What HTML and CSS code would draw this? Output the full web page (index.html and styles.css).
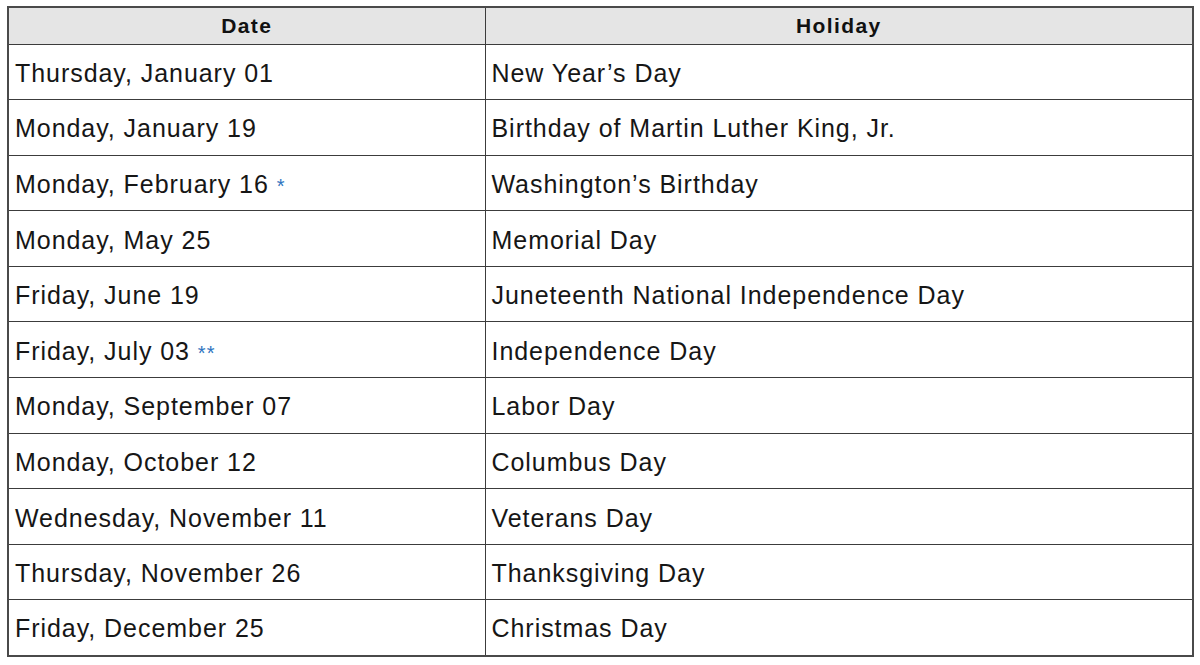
FILE: index.html
```html
<!DOCTYPE html>
<html>
<head>
<meta charset="utf-8">
<link rel="stylesheet" href="styles.css">
</head>
<body>
<table class="holidays">
  <colgroup><col class="c-date"><col class="c-hol"></colgroup>
  <thead>
    <tr><th>Date</th><th>Holiday</th></tr>
  </thead>
  <tbody>
    <tr><td>Thursday, January 01</td><td>New Year’s Day</td></tr>
    <tr><td>Monday, January 19</td><td>Birthday of Martin Luther King, Jr.</td></tr>
    <tr><td>Monday, February 16 <span class="note">*</span></td><td>Washington’s Birthday</td></tr>
    <tr><td>Monday, May 25</td><td>Memorial Day</td></tr>
    <tr><td>Friday, June 19</td><td>Juneteenth National Independence Day</td></tr>
    <tr><td>Friday, July 03 <span class="note">**</span></td><td>Independence Day</td></tr>
    <tr><td>Monday, September 07</td><td>Labor Day</td></tr>
    <tr><td>Monday, October 12</td><td>Columbus Day</td></tr>
    <tr><td>Wednesday, November 11</td><td>Veterans Day</td></tr>
    <tr><td>Thursday, November 26</td><td>Thanksgiving Day</td></tr>
    <tr><td>Friday, December 25</td><td>Christmas Day</td></tr>
  </tbody>
</table>
</body>
</html>
```
FILE: styles.css
```css
html, body {
  margin: 0;
  padding: 0;
  background: #ffffff;
}
body {
  padding: 6px 0 0 7px;
  font-family: "Liberation Sans", Arial, sans-serif;
  color: #161616;
}
.holidays {
  border-collapse: collapse;
  width: 1185px;
  table-layout: fixed;
  border: 2px solid #4a4a4a;
}
.c-date { width: 477px; }
.c-hol { width: 708px; }
.holidays th {
  background: #e5e5e5;
  font-size: 21px;
  font-weight: bold;
  letter-spacing: 1.4px;
  color: #111;
  height: 37px;
  padding: 0;
  text-align: center;
  border: 1px solid #3c3c3c;
  box-sizing: border-box;
}
.holidays td {
  font-size: 25px;
  letter-spacing: 0.95px;
  height: 55.6px;
  padding: 3px 0 0 6px;
  border: 1px solid #3c3c3c;
  box-sizing: border-box;
  vertical-align: middle;
  white-space: nowrap;
}
.note {
  color: #2f74c0;
  font-size: 20px;
  letter-spacing: 1px;
}
```
